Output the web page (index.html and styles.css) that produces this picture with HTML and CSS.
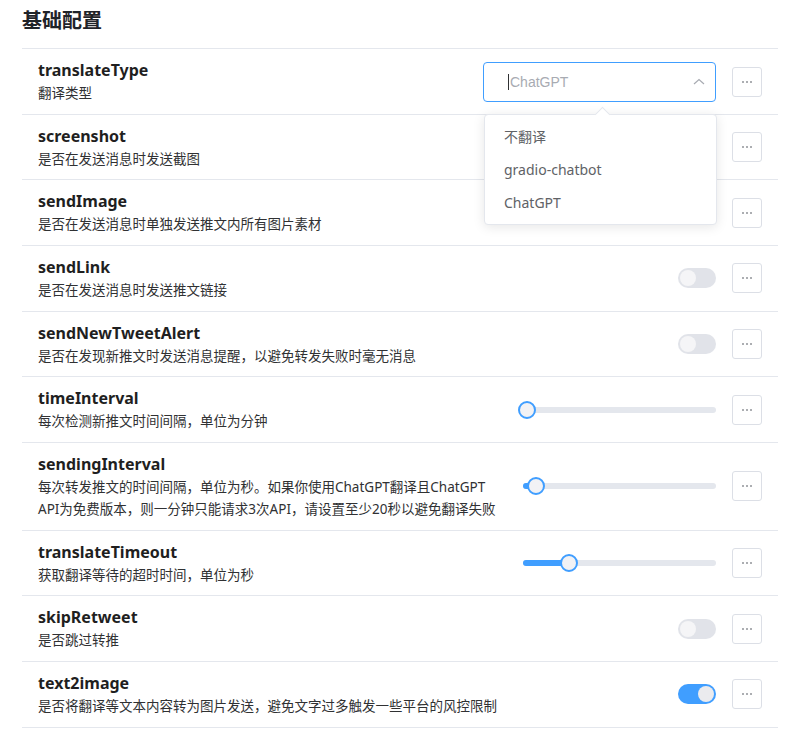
FILE: index.html
```html
<!DOCTYPE html>
<html lang="zh-CN">
<head>
    <meta charset="UTF-8">
    <meta name="viewport" content="width=device-width, initial-scale=1.0">
    <title>基础配置</title>
    <link rel="stylesheet" href="styles.css">
</head>
<body>
    <div class="page">
        <h2 class="section-title">基础配置</h2>
        <div class="config-list">

            <div class="config-item">
                <div class="item-info">
                    <div class="item-name">translateType</div>
                    <div class="item-desc">翻译类型</div>
                </div>
                <div class="item-control control-select">
                    <div class="select is-focus">
                        <span class="select-cursor"></span>
                        <span class="select-placeholder">ChatGPT</span>
                        <svg class="select-arrow" width="14" height="14" viewBox="0 0 14 14">
                            <polyline points="2,9 7,4.5 12,9" fill="none" stroke="#a8abb2" stroke-width="1.2"/>
                        </svg>
                        <div class="select-dropdown">
                            <span class="dropdown-arrow"></span>
                            <div class="dropdown-item">不翻译</div>
                            <div class="dropdown-item">gradio-chatbot</div>
                            <div class="dropdown-item">ChatGPT</div>
                        </div>
                    </div>
                </div>
                <button class="more-btn"><svg width="12" height="4" viewBox="0 0 12 4"><circle cx="2" cy="2" r="1"/><circle cx="6" cy="2" r="1"/><circle cx="10" cy="2" r="1"/></svg></button>
            </div>

            <div class="config-item">
                <div class="item-info">
                    <div class="item-name">screenshot</div>
                    <div class="item-desc">是否在发送消息时发送截图</div>
                </div>
                <div class="item-control control-switch">
                    <span class="switch"><span class="switch-knob"></span></span>
                </div>
                <button class="more-btn"><svg width="12" height="4" viewBox="0 0 12 4"><circle cx="2" cy="2" r="1"/><circle cx="6" cy="2" r="1"/><circle cx="10" cy="2" r="1"/></svg></button>
            </div>

            <div class="config-item">
                <div class="item-info">
                    <div class="item-name">sendImage</div>
                    <div class="item-desc">是否在发送消息时单独发送推文内所有图片素材</div>
                </div>
                <div class="item-control control-switch">
                    <span class="switch"><span class="switch-knob"></span></span>
                </div>
                <button class="more-btn"><svg width="12" height="4" viewBox="0 0 12 4"><circle cx="2" cy="2" r="1"/><circle cx="6" cy="2" r="1"/><circle cx="10" cy="2" r="1"/></svg></button>
            </div>

            <div class="config-item">
                <div class="item-info">
                    <div class="item-name">sendLink</div>
                    <div class="item-desc">是否在发送消息时发送推文链接</div>
                </div>
                <div class="item-control control-switch">
                    <span class="switch"><span class="switch-knob"></span></span>
                </div>
                <button class="more-btn"><svg width="12" height="4" viewBox="0 0 12 4"><circle cx="2" cy="2" r="1"/><circle cx="6" cy="2" r="1"/><circle cx="10" cy="2" r="1"/></svg></button>
            </div>

            <div class="config-item">
                <div class="item-info">
                    <div class="item-name">sendNewTweetAlert</div>
                    <div class="item-desc">是否在发现新推文时发送消息提醒，以避免转发失败时毫无消息</div>
                </div>
                <div class="item-control control-switch">
                    <span class="switch"><span class="switch-knob"></span></span>
                </div>
                <button class="more-btn"><svg width="12" height="4" viewBox="0 0 12 4"><circle cx="2" cy="2" r="1"/><circle cx="6" cy="2" r="1"/><circle cx="10" cy="2" r="1"/></svg></button>
            </div>

            <div class="config-item">
                <div class="item-info">
                    <div class="item-name">timeInterval</div>
                    <div class="item-desc">每次检测新推文时间间隔，单位为分钟</div>
                </div>
                <div class="item-control control-slider">
                    <div class="slider">
                        <div class="slider-bar" style="width: 2%"></div>
                        <span class="slider-thumb" style="left: 2%"></span>
                    </div>
                </div>
                <button class="more-btn"><svg width="12" height="4" viewBox="0 0 12 4"><circle cx="2" cy="2" r="1"/><circle cx="6" cy="2" r="1"/><circle cx="10" cy="2" r="1"/></svg></button>
            </div>

            <div class="config-item">
                <div class="item-info">
                    <div class="item-name">sendingInterval</div>
                    <div class="item-desc">每次转发推文的时间间隔，单位为秒。如果你使用ChatGPT翻译且ChatGPT API为免费版本，则一分钟只能请求3次API，请设置至少20秒以避免翻译失败</div>
                </div>
                <div class="item-control control-slider">
                    <div class="slider">
                        <div class="slider-bar" style="width: 6.5%"></div>
                        <span class="slider-thumb" style="left: 6.5%"></span>
                    </div>
                </div>
                <button class="more-btn"><svg width="12" height="4" viewBox="0 0 12 4"><circle cx="2" cy="2" r="1"/><circle cx="6" cy="2" r="1"/><circle cx="10" cy="2" r="1"/></svg></button>
            </div>

            <div class="config-item">
                <div class="item-info">
                    <div class="item-name">translateTimeout</div>
                    <div class="item-desc">获取翻译等待的超时时间，单位为秒</div>
                </div>
                <div class="item-control control-slider">
                    <div class="slider">
                        <div class="slider-bar" style="width: 24%"></div>
                        <span class="slider-thumb" style="left: 24%"></span>
                    </div>
                </div>
                <button class="more-btn"><svg width="12" height="4" viewBox="0 0 12 4"><circle cx="2" cy="2" r="1"/><circle cx="6" cy="2" r="1"/><circle cx="10" cy="2" r="1"/></svg></button>
            </div>

            <div class="config-item">
                <div class="item-info">
                    <div class="item-name">skipRetweet</div>
                    <div class="item-desc">是否跳过转推</div>
                </div>
                <div class="item-control control-switch">
                    <span class="switch"><span class="switch-knob"></span></span>
                </div>
                <button class="more-btn"><svg width="12" height="4" viewBox="0 0 12 4"><circle cx="2" cy="2" r="1"/><circle cx="6" cy="2" r="1"/><circle cx="10" cy="2" r="1"/></svg></button>
            </div>

            <div class="config-item">
                <div class="item-info">
                    <div class="item-name">text2image</div>
                    <div class="item-desc">是否将翻译等文本内容转为图片发送，避免文字过多触发一些平台的风控限制</div>
                </div>
                <div class="item-control control-switch">
                    <span class="switch is-checked"><span class="switch-knob"></span></span>
                </div>
                <button class="more-btn"><svg width="12" height="4" viewBox="0 0 12 4"><circle cx="2" cy="2" r="1"/><circle cx="6" cy="2" r="1"/><circle cx="10" cy="2" r="1"/></svg></button>
            </div>

        </div>
    </div>
</body>
</html>
```

FILE: styles.css
```css
body {
    margin: 0;
    background-color: #fff;
    font-family: "Noto Sans", "Noto Sans CJK SC", sans-serif;
    color: #303133;
}

.page {
    padding: 0 23px 0 22px;
}

.section-title {
    margin: 0;
    padding: 7px 0 13px;
    font-size: 20px;
    line-height: 28px;
    font-weight: 700;
    color: #1f2329;
}

.config-list {
    border-top: 1px solid #e4e7ed;
}

.config-item {
    display: flex;
    align-items: center;
    padding: 10px 16px 9.67px;
    border-bottom: 1px solid #e4e7ed;
}

.item-info {
    flex: 1;
    min-width: 0;
}

.item-name {
    margin-bottom: 1px;
    font-size: 16px;
    line-height: 22px;
    font-weight: 700;
    color: #1f1f1f;
}

.item-desc {
    max-width: 465px;
    font-size: 13.5px;
    line-height: 22px;
    color: #303133;
}

.item-control {
    display: flex;
    justify-content: flex-end;
    margin-left: 16px;
}

.control-select {
    width: 233px;
}

.control-slider {
    width: 193px;
}

.more-btn {
    width: 30px;
    height: 30px;
    margin-left: 16px;
    padding: 0;
    border: 1px solid #dcdfe6;
    border-radius: 3px;
    background-color: #fff;
    display: flex;
    align-items: center;
    justify-content: center;
    cursor: pointer;
}

.more-btn svg {
    fill: #909399;
}

/* select */
.select {
    position: relative;
    box-sizing: border-box;
    width: 233px;
    height: 40px;
    border: 1px solid #409eff;
    border-radius: 4px;
    display: flex;
    align-items: center;
    padding: 0 9px 0 24px;
}

.select-cursor {
    width: 1px;
    height: 16px;
    background-color: #303133;
    margin-right: 1px;
}

.select-placeholder {
    flex: 1;
    font-family: "Liberation Sans", Arial, sans-serif;
    font-size: 14px;
    color: #a8abb2;
}

.select-arrow {
    display: block;
}

.select-dropdown {
    position: absolute;
    top: 51px;
    left: 0;
    width: 233px;
    box-sizing: border-box;
    padding: 5px 0;
    background-color: #fff;
    border: 1px solid #e4e7ed;
    border-radius: 4px;
    box-shadow: 0 2px 12px rgba(0, 0, 0, 0.1);
    z-index: 10;
}

.dropdown-arrow {
    position: absolute;
    top: -6px;
    left: 112px;
    width: 10px;
    height: 10px;
    background-color: #fff;
    border-top: 1px solid #e4e7ed;
    border-left: 1px solid #e4e7ed;
    transform: rotate(45deg);
}

.dropdown-item {
    height: 33px;
    line-height: 33px;
    padding: 0 19px;
    font-size: 14px;
    color: #606266;
}

/* switch */
.switch {
    position: relative;
    display: block;
    width: 38px;
    height: 20px;
    border-radius: 10px;
    background-color: #dcdfe6;
    opacity: 0.85;
}

.switch-knob {
    position: absolute;
    top: 2px;
    left: 2px;
    width: 16px;
    height: 16px;
    border-radius: 50%;
    background-color: #f4f4f6;
}

.switch.is-checked {
    background-color: #409eff;
    opacity: 1;
}

.switch.is-checked .switch-knob {
    left: 20px;
    background-color: #ebebee;
}

/* slider */
.slider {
    position: relative;
    width: 193px;
    height: 6px;
    border-radius: 3px;
    background-color: #e4e7ed;
}

.slider-bar {
    height: 6px;
    border-radius: 3px;
    background-color: #409eff;
}

.slider-thumb {
    position: absolute;
    top: 50%;
    width: 18px;
    height: 18px;
    box-sizing: border-box;
    border: 2px solid #409eff;
    border-radius: 50%;
    background-color: #f2f2f5;
    transform: translate(-50%, -50%);
}
```
